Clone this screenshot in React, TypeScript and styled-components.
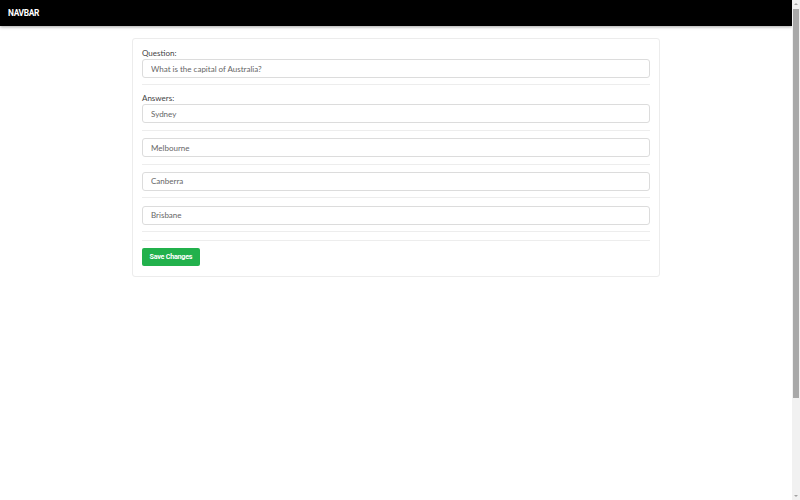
import React, { useState } from "react";
import styled, { createGlobalStyle } from "styled-components";

const GlobalStyle = createGlobalStyle`
  html, body {
    margin: 0;
    padding: 0;
    background: #fff;
  }
  body {
    font-family: "Lato", "Open Sans", "Liberation Sans", sans-serif;
    min-height: 625px;
  }
`;

// the page lays out beside the 8px window scrollbar
const Viewport = styled.div`
  margin-right: 8px;
`;

const ScrollTrack = styled.div`
  position: fixed;
  top: 0;
  right: 0;
  width: 8px;
  height: 100vh;
  display: flex;
  flex-direction: column;
  align-items: center;
  background: #f1f1f1;
`;

const ScrollArrow = styled.div<{ $down?: boolean }>`
  flex: 0 0 8px;
  display: flex;
  align-items: center;
  justify-content: center;

  &::before {
    content: "";
    border-left: 2px solid transparent;
    border-right: 2px solid transparent;
    ${(p) =>
      p.$down ? "border-top: 2px solid #a3a3a3;" : "border-bottom: 2px solid #a3a3a3;"}
  }
`;

const ScrollThumb = styled.div`
  width: 6px;
  height: 389px;
  margin-top: 1px;
  background: #a8a8a8;
`;

const ScrollSpacer = styled.div`
  flex: 1;
`;

const Navbar = styled.nav`
  display: flex;
  align-items: center;
  height: 26px;
  padding: 0 8px;
  background-color: #000;
  box-shadow: 0 1px 3px rgba(0, 0, 0, 0.35);
`;

const Brand = styled.span`
  font-family: "Roboto", "Liberation Sans", sans-serif;
  font-weight: 700;
  font-size: 8.4px;
  letter-spacing: -0.35px;
  color: #fff;
`;

const Page = styled.main`
  display: flex;
  justify-content: center;
  padding-top: 12px;
`;

const Card = styled.form`
  width: 528px;
  box-sizing: border-box;
  padding: 9px 9px 10px;
  border: 1px solid #ececec;
  border-radius: 3px;
  background: #fff;
`;

const Label = styled.label`
  display: block;
  height: 11px;
  line-height: 11px;
  font-size: 8px;
  color: #444;
`;

const Input = styled.input`
  display: block;
  width: 100%;
  height: 19px;
  box-sizing: border-box;
  padding: 0 8px;
  border: 1px solid #dcdcdc;
  border-radius: 3px;
  font-family: "Lato", "Open Sans", "Liberation Sans", sans-serif;
  font-size: 8px;
  color: #666;
  background: #fff;
  outline: none;
`;

const Divider = styled.hr<{ $before?: number; $after?: number }>`
  border: 0;
  border-top: 1px solid #ededed;
  margin: ${(p) => p.$before ?? 6.4}px 0 ${(p) => p.$after ?? 7.4}px;
`;

const Button = styled.button`
  display: block;
  height: 18px;
  padding: 0 7.5px;
  border: none;
  border-radius: 2px;
  background-color: #22b14c;
  color: #fff;
  font-family: "Roboto", "Liberation Sans", sans-serif;
  font-weight: 700;
  font-size: 7.2px;
  letter-spacing: -0.25px;
  cursor: pointer;
`;

const App: React.FC = () => {
  const [question, setQuestion] = useState("What is the capital of Australia?");
  const [answers, setAnswers] = useState([
    "Sydney",
    "Melbourne",
    "Canberra",
    "Brisbane",
  ]);

  const updateAnswer = (index: number, value: string) => {
    setAnswers((prev) => prev.map((a, i) => (i === index ? value : a)));
  };

  return (
    <>
      <GlobalStyle />
      <Viewport>
        <Navbar>
          <Brand>NAVBAR</Brand>
        </Navbar>
        <Page>
          <Card onSubmit={(e) => e.preventDefault()}>
            <Label>Question:</Label>
            <Input
              type="text"
              value={question}
              onChange={(e) => setQuestion(e.target.value)}
            />
            <Divider $after={8} />
            <Label>Answers:</Label>
            {answers.map((answer, i) => (
              <React.Fragment key={i}>
                <Input
                  type="text"
                  value={answer}
                  onChange={(e) => updateAnswer(i, e.target.value)}
                />
                <Divider />
              </React.Fragment>
            ))}
            <Divider $before={0} $after={7} />
            <Button type="submit">Save Changes</Button>
          </Card>
        </Page>
      </Viewport>
      <ScrollTrack>
        <ScrollArrow />
        <ScrollThumb />
        <ScrollSpacer />
        <ScrollArrow $down />
      </ScrollTrack>
    </>
  );
};

export default App;
